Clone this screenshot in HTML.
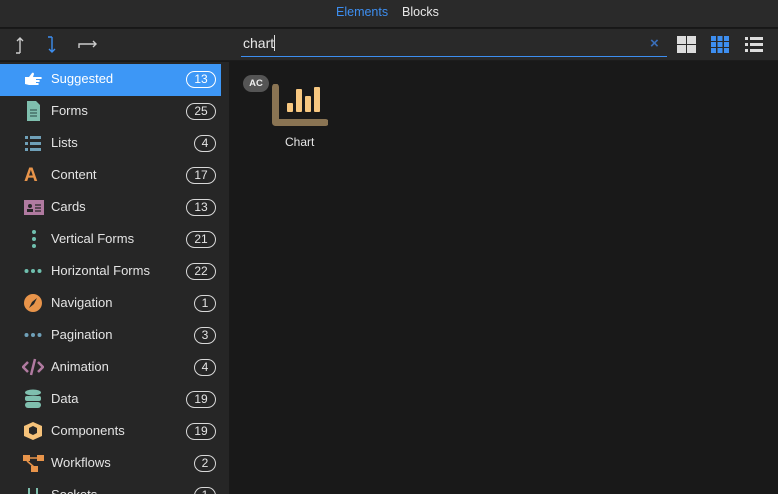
<!DOCTYPE html>
<html><head><style>
*{margin:0;padding:0;box-sizing:border-box}
body{width:778px;height:494px;overflow:hidden;background:#191919;font-family:"Liberation Sans",sans-serif;color:#e6e6e6;font-size:13px;position:relative}
.top{position:absolute;left:0;top:0;width:778px;height:28px;background:#2a2a2a;border-bottom:1px solid #171717}
.top span{position:absolute;top:5px;font-size:12.5px}
.tool{position:absolute;left:0;top:29px;width:778px;height:32px;background:#292929;border-bottom:1px solid #1c1c1c}
.side{position:absolute;left:0;top:62px;width:230px;height:432px;background:#262626;border-right:1px solid #1a1a1a;overflow:hidden}
.row{position:absolute;left:0;width:221px;height:32px}
.row.sel{background:#3d97f6}
.row .t{position:absolute;left:51px;top:7px;font-size:13px;color:#e4e4e4}
.row.sel .t{color:#fff}
.row .b{position:absolute;right:5px;top:7px;height:17px;border:1.3px solid #d8d8d8;border-radius:9px;font-size:12px;line-height:14px;text-align:center;color:#e4e4e4}
.row .i{position:absolute;left:22px;top:5px;width:22px;height:20px}
</style></head><body>
<div class="top"><span style="left:336px;color:#3d8ef0">Elements</span><span style="left:402px;color:#e8e8e8">Blocks</span></div>
<div class="tool">
<svg style="position:absolute;left:12px;top:5px" width="16" height="22"><path d="M8 19V4M5 7l3-3 3 3M8 19H4" stroke="#ccc" stroke-width="1.4" fill="none"/></svg>
<svg style="position:absolute;left:44px;top:5px" width="16" height="22"><path d="M8 3v15M5 15l3 3 3-3M8 3H4" stroke="#3d8ef0" stroke-width="1.4" fill="none"/></svg>
<svg style="position:absolute;left:77px;top:7px" width="22" height="16"><path d="M2 12V8h17M16 5l3 3-3 3" stroke="#ccc" stroke-width="1.4" fill="none"/></svg>
<div style="position:absolute;left:241px;top:6px;width:426px;height:22px;border-bottom:1.3px solid #3d8ef0;font-size:14px;color:#e8e8e8;padding-left:2px">chart<span style="border-left:1px solid #ddd;margin-left:0"> </span></div>
<div style="position:absolute;left:650px;top:6px;color:#3a6eb8;font-size:15px;font-weight:bold">×</div>
<svg style="position:absolute;left:677px;top:7px" width="20" height="18"><rect x="0" y="0" width="9" height="8" fill="#ddd"/><rect x="10" y="0" width="9" height="8" fill="#ddd"/><rect x="0" y="9" width="9" height="8" fill="#ddd"/><rect x="10" y="9" width="9" height="8" fill="#ddd"/></svg>
<svg style="position:absolute;left:711px;top:7px" width="20" height="18" fill="#3d8ef0"><rect x="0" y="0" width="5" height="5"/><rect x="6.5" y="0" width="5" height="5"/><rect x="13" y="0" width="5" height="5"/><rect x="0" y="6" width="5" height="5"/><rect x="6.5" y="6" width="5" height="5"/><rect x="13" y="6" width="5" height="5"/><rect x="0" y="12" width="5" height="5"/><rect x="6.5" y="12" width="5" height="5"/><rect x="13" y="12" width="5" height="5"/></svg>
<svg style="position:absolute;left:745px;top:8px" width="20" height="16" fill="#ddd"><rect x="0" y="0" width="3" height="3"/><rect x="5" y="0" width="13" height="3"/><rect x="0" y="6" width="3" height="3"/><rect x="5" y="6" width="13" height="3"/><rect x="0" y="12" width="3" height="3"/><rect x="5" y="12" width="13" height="3"/></svg>
</div>
<div class="side">
<div class="row sel" style="top:2px"><svg class="i" viewBox="0 0 22 20"><path d="M3 8h4l3-4c1-1 2 0 2 1l-1 3h8c1 0 1 2 0 2h-5v1h3c1 0 1 2 0 2h-3v1h2c1 0 1 2 0 2H7l-4-1z" fill="#fff"/></svg><span class="t">Suggested</span><span class="b" style="width:30px;border-color:#fff;color:#fff">13</span></div>
<div class="row" style="top:34px"><svg class="i" viewBox="0 0 22 20"><path d="M5 0h9l4 4v16H5z" fill="#7fbfae"/><path d="M8 9h7M8 12h7M8 15h7" stroke="#2a4a44" stroke-width="1"/></svg><span class="t">Forms</span><span class="b" style="width:30px">25</span></div>
<div class="row" style="top:66px"><svg class="i" viewBox="0 0 22 20" fill="#6fa0b8"><rect x="3" y="3" width="3" height="3"/><rect x="8" y="3" width="11" height="3"/><rect x="3" y="9" width="3" height="3"/><rect x="8" y="9" width="11" height="3"/><rect x="3" y="15" width="3" height="3"/><rect x="8" y="15" width="11" height="3"/></svg><span class="t">Lists</span><span class="b" style="width:22px">4</span></div>
<div class="row" style="top:98px"><div class="i" style="color:#e8944a;font-weight:bold;font-size:19px;left:24px;top:5px">A</div><span class="t">Content</span><span class="b" style="width:30px">17</span></div>
<div class="row" style="top:130px"><svg class="i" viewBox="0 0 22 20"><rect x="2" y="3" width="20" height="15" fill="#b07aa0"/><circle cx="8" cy="9" r="2" fill="#262626"/><rect x="5" y="12" width="6" height="3" fill="#262626"/><path d="M13 8h6M13 11h6M13 14h6" stroke="#262626" stroke-width="1.2"/></svg><span class="t">Cards</span><span class="b" style="width:30px">13</span></div>
<div class="row" style="top:162px"><svg class="i" viewBox="0 0 22 20" fill="#6fbfae"><circle cx="12" cy="3" r="2"/><circle cx="12" cy="10" r="2"/><circle cx="12" cy="17" r="2"/></svg><span class="t">Vertical Forms</span><span class="b" style="width:30px">21</span></div>
<div class="row" style="top:194px"><svg class="i" viewBox="0 0 22 20" fill="#6fbfae"><circle cx="4.5" cy="10" r="2"/><circle cx="11" cy="10" r="2"/><circle cx="17.5" cy="10" r="2"/></svg><span class="t">Horizontal Forms</span><span class="b" style="width:30px">22</span></div>
<div class="row" style="top:226px"><svg class="i" viewBox="0 0 22 20"><circle cx="11" cy="10" r="9" fill="#e8944a"/><path d="M15 5l-3 6-5 4 3-6z" fill="#262626"/></svg><span class="t">Navigation</span><span class="b" style="width:22px">1</span></div>
<div class="row" style="top:258px"><svg class="i" viewBox="0 0 22 20" fill="#6fa0b8"><circle cx="4.5" cy="10" r="2"/><circle cx="11" cy="10" r="2"/><circle cx="17.5" cy="10" r="2"/></svg><span class="t">Pagination</span><span class="b" style="width:22px">3</span></div>
<div class="row" style="top:290px"><svg class="i" viewBox="0 0 22 20" stroke="#b07aa0" stroke-width="2.5" fill="none"><path d="M6 5l-5 5 5 5M16 5l5 5-5 5M13 2l-4 16"/></svg><span class="t">Animation</span><span class="b" style="width:22px">4</span></div>
<div class="row" style="top:322px"><svg class="i" viewBox="0 0 22 20" fill="#7fbfae"><ellipse cx="11" cy="3.5" rx="8" ry="3"/><rect x="3" y="7" width="16" height="5" rx="2"/><rect x="3" y="13" width="16" height="6" rx="3"/></svg><span class="t">Data</span><span class="b" style="width:30px">19</span></div>
<div class="row" style="top:354px"><svg class="i" viewBox="0 0 22 20"><path d="M11 1l9 4v10l-9 4-9-4V5z" fill="#f5c27a"/><path d="M7 7l4-2 4 2v5l-4 2-4-2z" fill="#262626"/></svg><span class="t">Components</span><span class="b" style="width:30px">19</span></div>
<div class="row" style="top:386px"><svg class="i" viewBox="0 0 22 20" fill="#e8944a"><rect x="1" y="2" width="7" height="6"/><rect x="15" y="2" width="7" height="6"/><rect x="9" y="13" width="7" height="6"/><path d="M8 5h7M5 8l7 6" stroke="#e8944a" stroke-width="1.5"/></svg><span class="t">Workflows</span><span class="b" style="width:22px">2</span></div>
<div class="row" style="top:418px"><svg class="i" viewBox="0 0 22 20" fill="#7fbfae"><rect x="6" y="3" width="2" height="6"/><rect x="14" y="3" width="2" height="6"/><rect x="4" y="9" width="14" height="10"/></svg><span class="t">Sockets</span><span class="b" style="width:22px">1</span></div>
</div>
<div style="position:absolute;left:243px;top:75px;width:26px;height:17px;border-radius:9px;background:#555;color:#eee;font-size:9.5px;font-weight:bold;text-align:center;line-height:17px">AC</div>
<svg style="position:absolute;left:272px;top:84px" width="56" height="44"><path d="M3.5 3v35.5h50" stroke="#8a7453" stroke-width="7" fill="none" stroke-linejoin="round" stroke-linecap="round"/><rect x="15" y="19" width="6" height="9" rx="1" fill="#f7c780"/><rect x="24" y="5" width="6" height="23" rx="1" fill="#f7c780"/><rect x="33" y="12" width="6" height="16" rx="1" fill="#f7c780"/><rect x="42" y="3" width="6" height="25" rx="1" fill="#f7c780"/></svg>
<div style="position:absolute;left:285px;top:135px;font-size:12px;color:#e6e6e6">Chart</div>
</body></html>
